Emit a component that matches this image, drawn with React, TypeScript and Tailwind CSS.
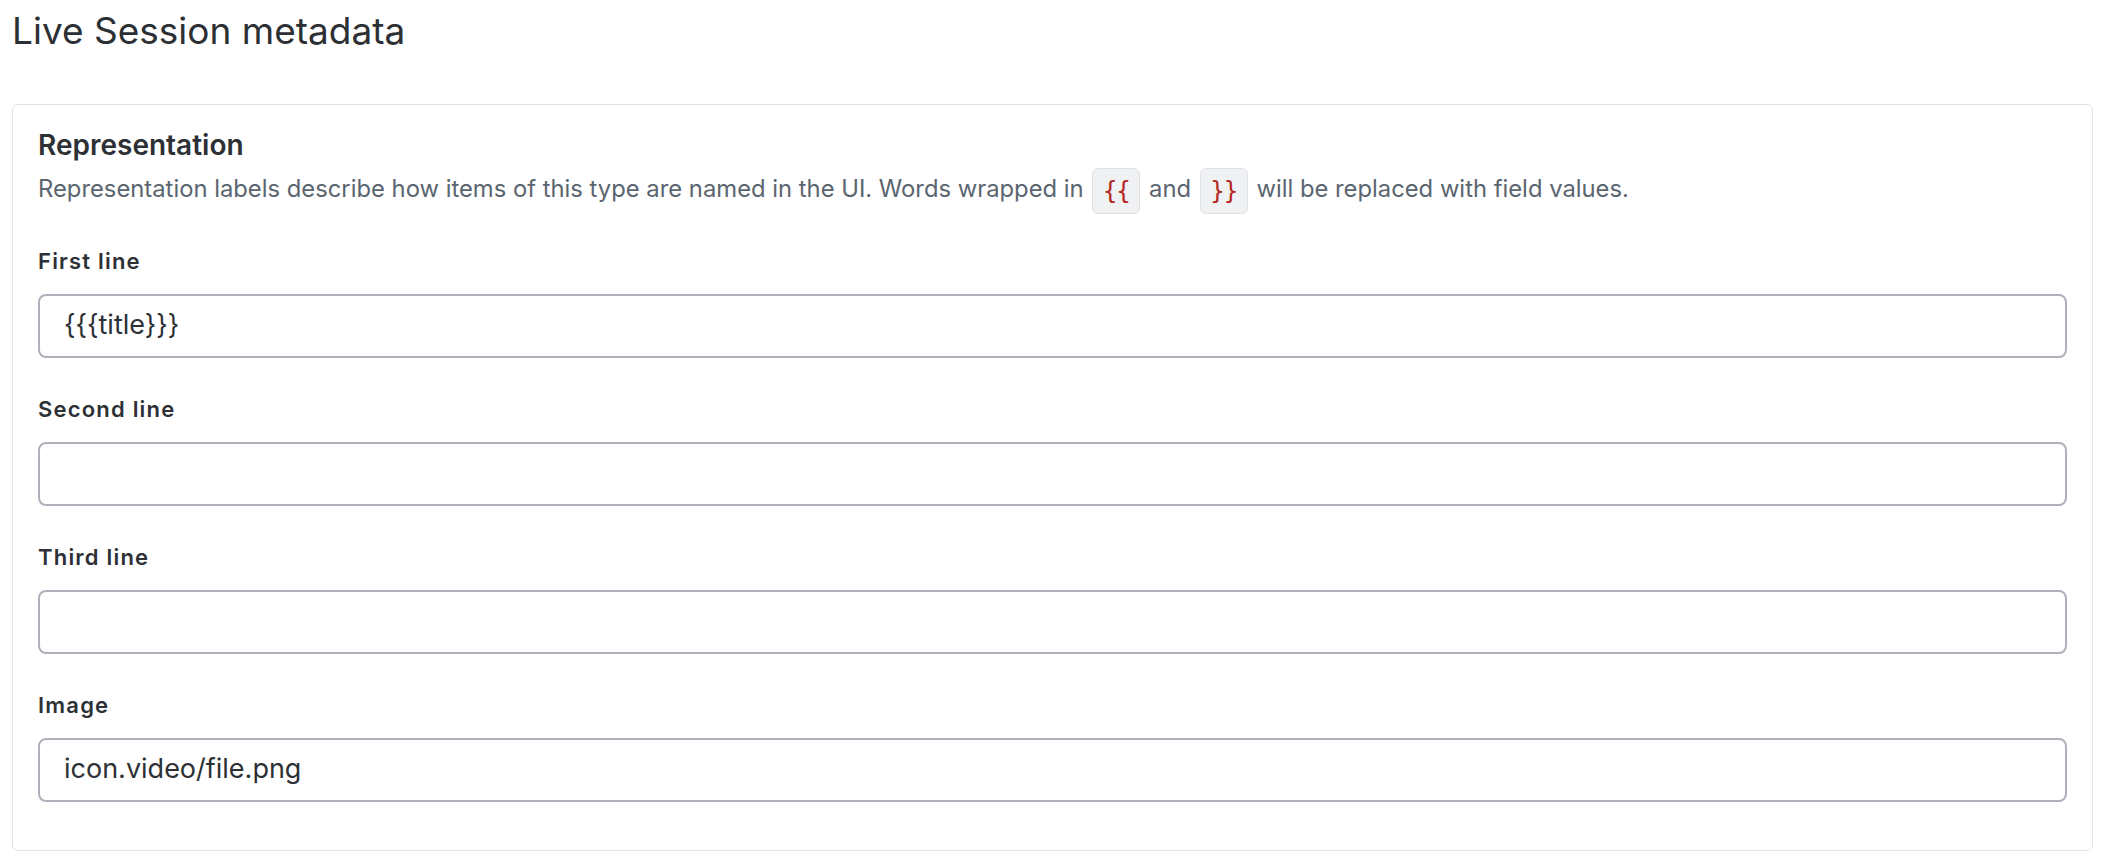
import React from "react";

const font = { fontFamily: "Inter, 'Noto Sans', sans-serif" };

function Field({ label, value, first }: { label: string; value: string; first?: boolean }) {
  return (
    <div className={first ? "mt-[32px]" : "mt-[36px]"}>
      <div className="text-[22px] leading-[30px] font-semibold tracking-[1.2px] text-[#2d3136]">{label}</div>
      <div className="mt-[18px] h-[64px] rounded-[8px] border-2 border-[#adb2bb] bg-white flex items-center pl-[24px] text-[27px] text-[#2d3136]">
        {value}
      </div>
    </div>
  );
}

function Chip({ children }: { children: React.ReactNode }) {
  return (
    <span
      className="inline-flex items-center justify-center align-middle h-[46px] w-[48px] mx-[2px] rounded-[6px] border border-[#dfe1e5] bg-[#f0f1f3] text-[24px] tracking-[-1px] text-[#b3261e]"
      style={{ fontFamily: "'DejaVu Sans Mono', 'Liberation Mono', monospace" }}
    >
      {children}
    </span>
  );
}

export default function App() {
  return (
    <div className="min-h-screen bg-white pl-[12px] pr-[29px] pt-[7px]" style={font}>
      <h1 className="text-[37px] leading-[48px] font-normal text-[#2c3034]">Live Session metadata</h1>
      <div className="mt-[49px] rounded-[6px] border border-[#e3e3e3] bg-white px-[25px] pt-[23px] pb-[48px]">
        <h2 className="text-[28px] leading-[34px] font-semibold text-[#2d3136]">Representation</h2>
        <p className="mt-[4px] text-[23.8px] leading-[46px] text-[#5b6570]">
          Representation labels describe how items of this type are named in the UI. Words wrapped in <Chip>{"{{"}</Chip> and{" "}
          <Chip>{"}}"}</Chip> will be replaced with field values.
        </p>
        <Field first label="First line" value="{{{title}}}" />
        <Field label="Second line" value="" />
        <Field label="Third line" value="" />
        <Field label="Image" value="icon.video/file.png" />
      </div>
    </div>
  );
}
